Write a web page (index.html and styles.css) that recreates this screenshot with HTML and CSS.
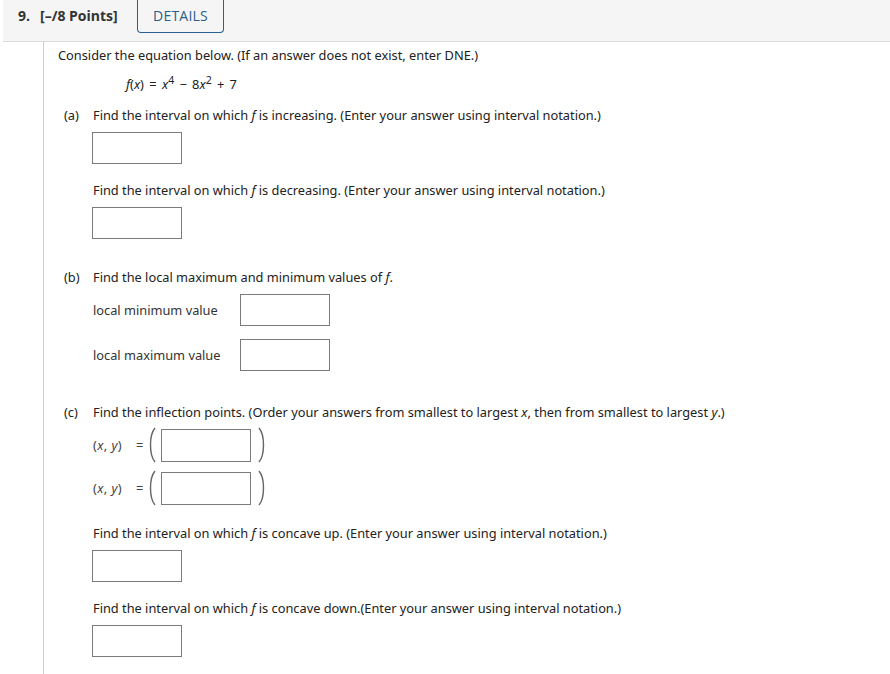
FILE: index.html
```html
<!DOCTYPE html>
<html>
<head>
<meta charset="utf-8">
<link rel="stylesheet" href="styles.css">
</head>
<body>
<div class="page">
  <div class="header">
    <div class="qtitle"><span class="qnum">9.</span><span class="points">[–/8 Points]</span></div>
    <div class="details">DETAILS</div>
  </div>
  <div class="main">
    <div class="gutter"></div>
    <div class="content">
      <p class="intro">Consider the equation below. (If an answer does not exist, enter DNE.)</p>
      <p class="eq"><i>f</i>(<i>x</i>) = <i>x</i><sup>4</sup> − 8<i>x</i><sup>2</sup> + 7</p>

      <div class="part part-a">
        <span class="plabel">(a)</span>
        <div class="pbody">
          <p class="line">Find the interval on which <i>f</i> is increasing. (Enter your answer using interval notation.)</p>
          <div class="box"></div>
          <p class="line gap18">Find the interval on which <i>f</i> is decreasing. (Enter your answer using interval notation.)</p>
          <div class="box"></div>
        </div>
      </div>

      <div class="part part-b">
        <span class="plabel">(b)</span>
        <div class="pbody">
          <p class="line">Find the local maximum and minimum values of <i>f</i>.</p>
          <div class="row row-first"><span class="rlabel">local minimum value</span><div class="box"></div></div>
          <div class="row row-next"><span class="rlabel">local maximum value</span><div class="box"></div></div>
        </div>
      </div>

      <div class="part part-c">
        <span class="plabel">(c)</span>
        <div class="pbody">
          <p class="line">Find the inflection points. (Order your answers from smallest to largest <i>x</i>, then from smallest to largest <i>y</i>.)</p>
          <div class="prow prow-first">
            <span class="xy">(<i>x</i>, <i>y</i>)</span><span class="eqs">=</span>
            <svg class="paren" width="10" height="36" viewBox="0 0 10 36"><path d="M8 1 C2 8 2 28 8 35" fill="none" stroke="#666" stroke-width="1.4"/></svg>
            <div class="box pbox"></div>
            <svg class="paren rparen" width="10" height="36" viewBox="0 0 10 36"><path d="M2 1 C8 8 8 28 2 35" fill="none" stroke="#666" stroke-width="1.4"/></svg>
          </div>
          <div class="prow prow-next">
            <span class="xy">(<i>x</i>, <i>y</i>)</span><span class="eqs">=</span>
            <svg class="paren" width="10" height="36" viewBox="0 0 10 36"><path d="M8 1 C2 8 2 28 8 35" fill="none" stroke="#666" stroke-width="1.4"/></svg>
            <div class="box pbox"></div>
            <svg class="paren rparen" width="10" height="36" viewBox="0 0 10 36"><path d="M2 1 C8 8 8 28 2 35" fill="none" stroke="#666" stroke-width="1.4"/></svg>
          </div>
          <p class="line gap19">Find the interval on which <i>f</i> is concave up. (Enter your answer using interval notation.)</p>
          <div class="box"></div>
          <p class="line gap18">Find the interval on which <i>f</i> is concave down.(Enter your answer using interval notation.)</p>
          <div class="box"></div>
        </div>
      </div>
    </div>
  </div>
</div>
</body>
</html>
```

FILE: styles.css
```css
html, body {
  margin: 0;
  padding: 0;
  background: #fff;
}
.page {
  padding-left: 3px;
  width: 887px;
  height: 674px;
  overflow: hidden;
}
.header {
  height: 41px;
  background: #f5f5f5;
  border-bottom: 1px solid #dcdcdc;
  display: flex;
  align-items: flex-start;
}
.qtitle {
  font-family: "Open Sans", "Liberation Sans", sans-serif;
  font-weight: 700;
  font-size: 14px;
  color: #333;
  padding-left: 15px;
  line-height: 32px;
  width: 119px;
  display: flex;
  gap: 10px;
}
.details {
  box-sizing: border-box;
  width: 87px;
  height: 33px;
  border: 1px solid #2b5f8e;
  border-top: none;
  border-radius: 0 0 4px 4px;
  font-family: "Open Sans", "Liberation Sans", sans-serif;
  font-size: 14px;
  color: #2a5d8c;
  text-align: center;
  line-height: 32px;
  letter-spacing: 0.2px;
}
.main {
  display: flex;
  height: 632px;
}
.gutter {
  width: 40px;
  border-right: 1px solid #cfcfcf;
}
.content {
  padding-left: 14px;
  padding-top: 5px;
  font-family: "Noto Sans", "Open Sans", sans-serif;
  font-size: 12.8px;
  color: #222;
  line-height: 16px;
}
p {
  margin: 0;
}
i {
  font-style: italic;
}
.intro {
  height: 16px;
}
.eq {
  margin-top: 13px;
  padding-left: 68px;
  height: 16px;
  word-spacing: 2px;
}
.eq sup {
  font-size: 10.5px;
  line-height: 0;
  vertical-align: 5px;
}
.part {
  display: flex;
  padding-left: 6px;
}
.part-a {
  margin-top: 15px;
}
.part-b {
  margin-top: 30px;
}
.part-c {
  margin-top: 33px;
}
.plabel {
  width: 29px;
  flex: none;
}
.pbody {
  display: flex;
  flex-direction: column;
  align-items: flex-start;
}
.line {
  height: 16px;
  white-space: nowrap;
}
.gap18 {
  margin-top: 18px;
}
.gap19 {
  margin-top: 19px;
}
.box {
  box-sizing: border-box;
  width: 90px;
  height: 32px;
  border: 1px solid #7b7b7b;
  background: #fff;
  margin-top: 9px;
  margin-left: -1px;
}
.row {
  display: flex;
  align-items: center;
}
.row .box {
  margin-top: 0;
  margin-left: 0;
}
.row-first {
  margin-top: 9px;
}
.row-next {
  margin-top: 13px;
}
.rlabel {
  width: 147px;
  color: #333;
}
.prow {
  display: flex;
  align-items: center;
  height: 36px;
}
.prow-first {
  margin-top: 7px;
}
.prow-next {
  margin-top: 7px;
}
.xy {
  color: #444;
  width: 43px;
  letter-spacing: 0.4px;
}
.eqs {
  color: #444;
  width: 11px;
}
.paren {
  display: block;
}
.pbox {
  margin-top: 0;
  margin-left: 4px;
  height: 33px;
}
.rparen {
  margin-left: 6px;
}
```
